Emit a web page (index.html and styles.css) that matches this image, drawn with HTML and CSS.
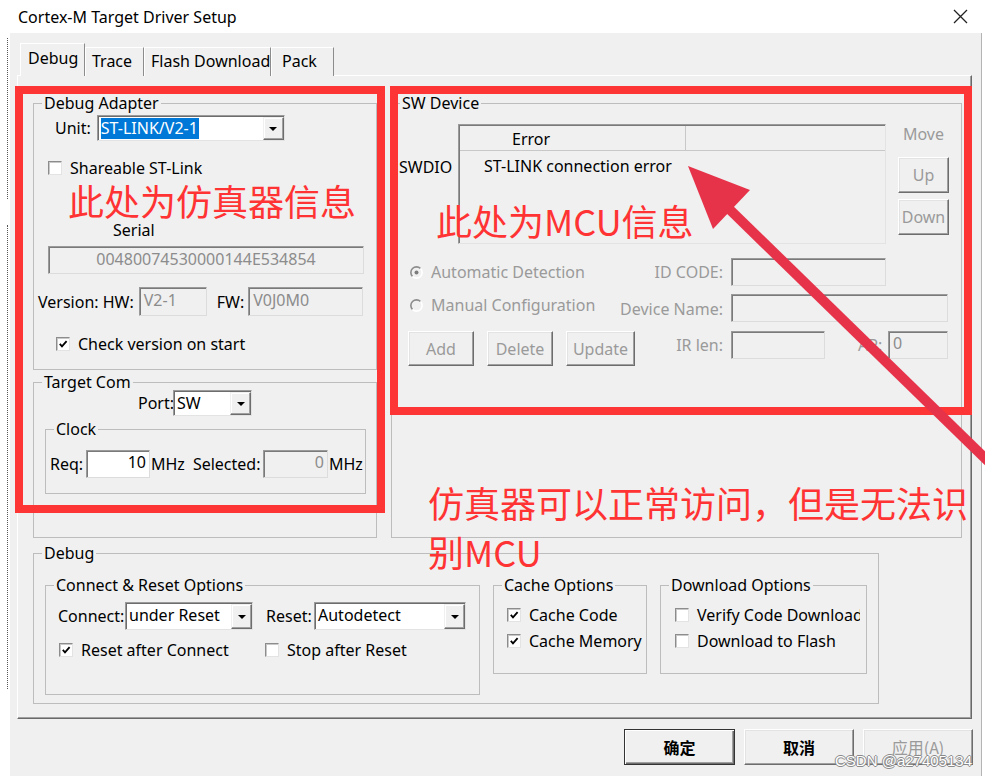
FILE: index.html
```html
<!DOCTYPE html>
<html lang="zh-CN">
<head>
    <meta charset="UTF-8">
    <meta name="viewport" content="width=device-width, initial-scale=1.0">
    <title>Cortex-M Target Driver Setup</title>
    <link rel="stylesheet" href="styles.css">
</head>
<body>
    <header class="titlebar">
        <span class="title">Cortex-M Target Driver Setup</span>
        <svg class="close" width="15" height="15" viewBox="0 0 15 15"><path d="M1 1L14 14M14 1L1 14" stroke="#222" stroke-width="1.3" fill="none"/></svg>
    </header>

    <div class="window">
        <div class="tabs">
            <div class="tab active w-debug">Debug</div>
            <div class="tab w-trace">Trace</div>
            <div class="tab w-flash">Flash Download</div>
            <div class="tab w-pack">Pack</div>
        </div>

        <div class="panel">
            <div class="top">
                <div class="col-left">
                    <!-- Debug Adapter -->
                    <fieldset class="grp adapter">
                        <legend>Debug Adapter</legend>
                        <div class="row unit-row">
                            <span class="lbl">Unit:</span>
                            <div class="combo c-unit"><span class="val"><span class="sel">ST-LINK/V2-1</span></span><span class="drop"><i></i></span></div>
                        </div>
                        <div class="row share-row">
                            <span class="chk"></span><span class="chk-lbl">Shareable ST-Link</span>
                        </div>
                        <div class="serial-lbl">Serial</div>
                        <div class="edit serial">00480074530000144E534854</div>
                        <div class="row ver-row">
                            <span class="lbl">Version: HW:</span>
                            <div class="edit e-hw">V2-1</div>
                            <span class="lbl fw">FW:</span>
                            <div class="edit e-fw">V0J0M0</div>
                        </div>
                        <div class="row chkver-row">
                            <span class="chk"><svg width="10" height="10" viewBox="0 0 10 10"><path d="M1.8 4.8L4 7.3L8.6 2.2" stroke="#000" stroke-width="1.8" fill="none"/></svg></span><span class="chk-lbl">Check version on start</span>
                        </div>
                    </fieldset>

                    <!-- Target Com -->
                    <fieldset class="grp target">
                        <legend>Target Com</legend>
                        <div class="row port-row">
                            <span class="lbl">Port:</span>
                            <div class="combo c-port"><span class="val">SW</span><span class="drop"><i></i></span></div>
                        </div>
                        <fieldset class="grp clock">
                            <legend>Clock</legend>
                            <div class="row clock-row">
                                <span class="lbl">Req:</span>
                                <div class="edit on num e-req">10</div>
                                <span class="lbl mhz">MHz</span>
                                <span class="lbl sel-lbl">Selected:</span>
                                <div class="edit num e-selected">0</div>
                                <span class="lbl mhz">MHz</span>
                            </div>
                        </fieldset>
                    </fieldset>
                </div>

                <!-- SW Device -->
                <fieldset class="grp swdev">
                    <legend>SW Device</legend>
                    <div class="sw-top">
                        <span class="swdio">SWDIO</span>
                        <div class="list">
                            <div class="list-head"><span class="hc1">Error</span><span class="hc2"></span></div>
                            <div class="list-row">ST-LINK connection error</div>
                        </div>
                        <div class="move-col">
                            <span class="off">Move</span>
                            <div class="btn off b-up">Up</div>
                            <div class="btn off b-down">Down</div>
                        </div>
                    </div>
                    <div class="row sw-row r-id">
                        <span class="radio"><svg width="13" height="13" viewBox="0 0 13 13"><circle cx="6.5" cy="6.5" r="5.6" fill="#f0f0f0"/><path d="M10.5 2.5A5.6 5.6 0 0 0 2.5 10.5" stroke="#8c8c8c" stroke-width="1.6" fill="none"/><path d="M10.5 2.5A5.6 5.6 0 0 1 2.5 10.5" stroke="#fff" stroke-width="1.6" fill="none"/><circle cx="6.5" cy="6.5" r="2" fill="#7c7c7c"/></svg></span>
                        <span class="off radio-lbl">Automatic Detection</span>
                        <span class="off flbl">ID CODE:</span>
                        <div class="edit e-id"></div>
                    </div>
                    <div class="row sw-row r-name">
                        <span class="radio"><svg width="13" height="13" viewBox="0 0 13 13"><circle cx="6.5" cy="6.5" r="5.6" fill="#f0f0f0"/><path d="M10.5 2.5A5.6 5.6 0 0 0 2.5 10.5" stroke="#8c8c8c" stroke-width="1.6" fill="none"/><path d="M10.5 2.5A5.6 5.6 0 0 1 2.5 10.5" stroke="#fff" stroke-width="1.6" fill="none"/></svg></span>
                        <span class="off radio-lbl">Manual Configuration</span>
                        <span class="off flbl">Device Name:</span>
                        <div class="edit e-name"></div>
                    </div>
                    <div class="row sw-row r-btns">
                        <div class="btn off b-add">Add</div>
                        <div class="btn off b-del">Delete</div>
                        <div class="btn off b-upd">Update</div>
                        <span class="off flbl">IR len:</span>
                        <div class="edit e-ir"></div>
                        <span class="off ap-lbl">AP:</span>
                        <div class="edit e-ap">0</div>
                    </div>
                </fieldset>
            </div>

            <!-- Debug -->
            <fieldset class="grp debug">
                <legend>Debug</legend>
                <div class="dbg-inner">
                    <fieldset class="grp conn">
                        <legend>Connect &amp; Reset Options</legend>
                        <div class="row conn-row">
                            <span class="lbl l-connect">Connect:</span>
                            <div class="combo c-connect"><span class="val">under Reset</span><span class="drop"><i></i></span></div>
                            <span class="lbl l-reset">Reset:</span>
                            <div class="combo c-reset"><span class="val">Autodetect</span><span class="drop"><i></i></span></div>
                        </div>
                        <div class="row conn-chk">
                            <div class="opt o-rac"><span class="chk"><svg width="10" height="10" viewBox="0 0 10 10"><path d="M1.8 4.8L4 7.3L8.6 2.2" stroke="#000" stroke-width="1.8" fill="none"/></svg></span><span class="chk-lbl">Reset after Connect</span></div>
                            <div class="opt"><span class="chk"></span><span class="chk-lbl">Stop after Reset</span></div>
                        </div>
                    </fieldset>
                    <fieldset class="grp cache">
                        <legend>Cache Options</legend>
                        <div class="row opt-row first"><span class="chk"><svg width="10" height="10" viewBox="0 0 10 10"><path d="M1.8 4.8L4 7.3L8.6 2.2" stroke="#000" stroke-width="1.8" fill="none"/></svg></span><span class="chk-lbl">Cache Code</span></div>
                        <div class="row opt-row"><span class="chk"><svg width="10" height="10" viewBox="0 0 10 10"><path d="M1.8 4.8L4 7.3L8.6 2.2" stroke="#000" stroke-width="1.8" fill="none"/></svg></span><span class="chk-lbl">Cache Memory</span></div>
                    </fieldset>
                    <fieldset class="grp dl">
                        <legend>Download Options</legend>
                        <div class="row opt-row first"><span class="chk"></span><span class="chk-lbl">Verify Code Download</span></div>
                        <div class="row opt-row"><span class="chk"></span><span class="chk-lbl">Download to Flash</span></div>
                    </fieldset>
                </div>
            </fieldset>
        </div>

        <div class="footer">
            <div class="btn default b-ok">确定</div>
            <div class="btn b-cancel">取消</div>
            <div class="btn off b-apply">应用(A)</div>
        </div>
    </div>

    <!-- 标注 -->
    <div class="dots d1"></div>
    <div class="dots d2"></div>
    <div class="mark mark-a"></div>
    <div class="mark mark-b"></div>
    <div class="note note-a">此处为仿真器信息</div>
    <div class="note note-b">此处为MCU信息</div>
    <div class="note note-c">仿真器可以正常访问，但是无法识别MCU</div>
    <svg class="arrow" width="985" height="776" viewBox="0 0 985 776">
        <line x1="995" y1="468" x2="722" y2="202" stroke="#e6334a" stroke-width="10"/>
        <polygon points="688,166 750,190 713,229" fill="#e6334a"/>
    </svg>
    <div class="watermark">CSDN @a27405134</div>
</body>
</html>
```

FILE: styles.css
```css
* {
    box-sizing: border-box;
}
html, body {
    margin: 0;
    padding: 0;
}
body {
    width: 985px;
    height: 776px;
    overflow: hidden;
    position: relative;
    background: #fff;
    font-family: "Noto Sans", "Noto Sans CJK SC", sans-serif;
    font-size: 16px;
    line-height: 20px;
    color: #000;
}

/* 标题栏 */
.titlebar {
    height: 33px;
    display: flex;
    align-items: center;
    padding-left: 18px;
}
.close {
    margin-left: auto;
    margin-right: 17px;
}

.window {
    margin-left: 10px;
    width: 972px;
    height: 743px;
    background: #f0f0f0;
    border-right: 1px solid #b4b4b4;
    padding-top: 10px;
}

/* 选项卡 */
.tabs {
    display: flex;
    align-items: flex-end;
    height: 33px;
    padding-left: 10px;
    margin-bottom: -1px;
    position: relative;
    z-index: 1;
}
.tab {
    height: 29px;
    line-height: 27px;
    padding-left: 6px;
    border-top: 1px solid #fff;
    border-left: 1px solid #fff;
    border-right: 1px solid #8c8c8c;
    background: #f0f0f0;
    white-space: nowrap;
    overflow: hidden;
}
.tab.active {
    height: 33px;
    line-height: 29px;
    padding-left: 7px;
}
.w-debug { width: 65px; }
.w-trace { width: 59px; }
.w-flash { width: 127px; padding-left: 6px; }
.w-pack { width: 63px; padding-left: 10px; }

.panel {
    margin-left: 7px;
    width: 955px;
    height: 644px;
    border-top: 1px solid #fff;
    border-left: 1px solid #fff;
    border-right: 1px solid #696969;
    border-bottom: 1px solid #696969;
    box-shadow: inset -1px -1px 0 #a0a0a0;
    padding: 17px 0 0 15px;
}
.top {
    display: flex;
    align-items: flex-start;
}
.col-left {
    width: 344px;
}

/* 分组框 */
.grp {
    margin: 0;
    padding: 0;
    min-width: 0;
    border: 1px solid #bdbdbd;
}
legend {
    padding: 0 2px;
    margin-left: 8px;
    height: 20px;
    line-height: 20px;
}
.row {
    display: flex;
    align-items: center;
}
.lbl {
    white-space: nowrap;
}
.off {
    color: #9a9a9a;
}

/* 控件 */
.combo {
    display: flex;
    height: 26px;
    background: #fff;
    border: 1px solid;
    border-color: #9a9a9a #e3e3e3 #e3e3e3 #9a9a9a;
    box-shadow: inset 1px 1px 0 #6d6d6d;
    padding: 1px 0 0 1px;
}
.combo .val {
    flex: 1;
    padding-left: 2px;
    line-height: 22px;
    white-space: nowrap;
    overflow: hidden;
}
.combo .sel {
    display: inline-block;
    background: #0078d7;
    color: #fff;
    line-height: 21px;
    padding-right: 1px;
}
.drop {
    width: 21px;
    background: #f0f0f0;
    border: 1px solid;
    border-color: #f0f0f0 #6d6d6d #6d6d6d #f0f0f0;
    box-shadow: inset -1px -1px 0 #a0a0a0, inset 1px 1px 0 #fff;
    display: flex;
    align-items: center;
    justify-content: center;
}
.drop i {
    width: 0;
    height: 0;
    border-top: 4px solid #000;
    border-left: 4px solid transparent;
    border-right: 4px solid transparent;
}
.edit {
    height: 28px;
    line-height: 25px;
    padding: 0 4px;
    background: #f0f0f0;
    color: #8c8c8c;
    border: 1px solid;
    border-color: #9a9a9a #dcdcdc #dcdcdc #9a9a9a;
    box-shadow: inset 1px 1px 0 #7a7a7a;
    white-space: nowrap;
    overflow: hidden;
}
.edit.on {
    background: #fff;
    color: #000;
}
.edit.num {
    text-align: right;
    padding-right: 3px;
    line-height: 23px;
}
.chk {
    width: 14px;
    height: 14px;
    flex: none;
    background: #fff;
    border: 1px solid;
    border-color: #8c8c8c #e3e3e3 #e3e3e3 #8c8c8c;
    box-shadow: inset 1px 1px 0 #c8c8c8;
    display: flex;
    align-items: center;
    justify-content: center;
}
.chk-lbl {
    margin-left: 8px;
    white-space: nowrap;
}
.btn {
    display: flex;
    align-items: center;
    justify-content: center;
    background: #f0f0f0;
    border: 1px solid;
    border-color: #fff #6d6d6d #6d6d6d #fff;
    box-shadow: inset -1px -1px 0 #a0a0a0, inset 1px 1px 0 #e3e3e3;
}
.radio {
    display: flex;
    width: 13px;
    height: 13px;
}

/* Debug Adapter */
.adapter {
    height: 277px;
}
.unit-row {
    margin-top: 2px;
    height: 26px;
}
.unit-row .lbl {
    margin-left: 21px;
}
.c-unit {
    margin-left: 6px;
    width: 188px;
}
.share-row {
    margin-top: 17px;
    height: 20px;
}
.share-row .chk {
    margin-left: 14px;
}
.serial-lbl {
    margin-top: 42px;
    margin-left: 79px;
}
.edit.serial {
    margin-top: 6px;
    margin-left: 14px;
    width: 316px;
    text-align: center;
}
.ver-row {
    margin-top: 13px;
    height: 29px;
}
.ver-row .lbl {
    margin-left: 4px;
}
.ver-row .edit {
    height: 29px;
}
.e-hw {
    margin-left: 5px;
    width: 68px;
}
.ver-row .fw {
    margin-left: 10px;
}
.e-fw {
    margin-left: 4px;
    width: 115px;
}
.chkver-row {
    margin-top: 18px;
    height: 20px;
}
.chkver-row .chk {
    margin-left: 22px;
}

/* Target Com */
.target {
    margin-top: 2px;
    height: 166px;
}
.port-row {
    margin-top: -2px;
    height: 26px;
}
.port-row .lbl {
    margin-left: 104px;
    width: 35px;
}
.c-port {
    width: 79px;
}
.clock {
    margin: 3px 0 0 11px;
    width: 321px;
    height: 75px;
}
.clock-row {
    margin-top: 11px;
    height: 28px;
}
.clock-row .lbl:first-child {
    margin-left: 4px;
    width: 36px;
}
.e-req {
    width: 64px;
}
.clock-row .mhz {
    margin-left: 1px;
}
.clock-row .sel-lbl {
    margin-left: 8px;
    width: 70px;
}
.e-selected {
    width: 65px;
}

/* SW Device */
.swdev {
    margin-left: 14px;
    width: 571px;
    height: 445px;
}
.sw-top {
    display: flex;
    align-items: flex-start;
    margin-top: 11px;
    height: 120px;
}
.swdio {
    margin: 33px 0 0 7px;
    width: 59px;
}
.list {
    width: 428px;
    height: 120px;
    background: #f0f0f0;
    border: 1px solid;
    border-color: #9a9a9a #e3e3e3 #e3e3e3 #9a9a9a;
    box-shadow: inset 1px 1px 0 #7a7a7a;
    padding: 1px 0 0 1px;
}
.list-head {
    display: flex;
    height: 25px;
}
.hc1, .hc2 {
    border-bottom: 1px solid #c8c8c8;
    line-height: 26px;
}
.hc1 {
    width: 226px;
    padding-left: 52px;
    border-right: 1px solid #c8c8c8;
}
.hc2 {
    flex: 1;
}
.list-row {
    margin-top: 5px;
    padding-left: 24px;
}
.move-col {
    margin-left: 12px;
    width: 51px;
    display: flex;
    flex-direction: column;
    align-items: center;
}
.move-col .btn {
    width: 51px;
    height: 36px;
}
.b-up {
    margin-top: 13px;
}
.b-down {
    margin-top: 6px;
}
.sw-row {
    width: 556px;
}
.r-id {
    margin-top: 14px;
    height: 28px;
}
.r-name {
    margin-top: 8px;
    height: 28px;
}
.sw-row .radio {
    margin-left: 18px;
}
.r-name .radio, .r-name .radio-lbl {
    margin-top: -6px;
}
.radio-lbl {
    margin-left: 8px;
    white-space: nowrap;
}
.flbl {
    margin-left: auto;
    margin-right: 8px;
    white-space: nowrap;
}
.r-name .flbl {
    margin-top: 2px;
}
.e-id {
    width: 155px;
    margin-right: 62px;
}
.e-name {
    width: 217px;
}
.r-btns {
    margin-top: 9px;
    align-items: flex-start;
}
.r-btns .btn {
    height: 35px;
    width: 66px;
    margin-left: 13px;
}
.r-btns .b-add {
    margin-left: 16px;
}
.r-btns .b-upd {
    width: 69px;
}
.r-btns .flbl, .ap-lbl {
    line-height: 28px;
}
.e-ir {
    width: 94px;
}
.ap-lbl {
    margin-left: 33px;
    width: 24px;
    margin-right: 6px;
}
.e-ap {
    width: 60px;
    line-height: 23px;
}

/* Debug */
.debug {
    margin-top: 5px;
    width: 846px;
    height: 161px;
}
.dbg-inner {
    display: flex;
    align-items: flex-start;
    margin-top: 12px;
}
.conn {
    margin-left: 11px;
    width: 435px;
    height: 120px;
}
.cache {
    margin-left: 13px;
    width: 154px;
    height: 99px;
}
.dl {
    margin-left: 13px;
    width: 207px;
    height: 99px;
}
.conn-row {
    margin-top: 7px;
    height: 28px;
}
.conn-row .combo {
    height: 28px;
}
.l-connect {
    margin-left: 12px;
    width: 67px;
}
.c-connect {
    width: 128px;
}
.l-reset {
    margin-left: 13px;
    width: 48px;
}
.c-reset {
    width: 152px;
}
.conn-chk {
    margin-top: 10px;
    height: 20px;
}
.opt {
    display: flex;
    align-items: center;
}
.o-rac {
    margin-left: 13px;
    width: 206px;
}
.opt-row {
    margin-top: 6px;
    height: 20px;
}
.opt-row.first {
    margin-top: 10px;
}
.opt-row .chk {
    margin-left: 13px;
}
.dl .opt-row {
    width: 199px;
    overflow: hidden;
}
.dl .opt-row .chk {
    margin-left: 14px;
}

/* 底部按钮 */
.footer {
    display: flex;
    justify-content: flex-end;
    gap: 9px;
    margin-top: 10px;
    padding-right: 8px;
}
.footer .btn {
    height: 36px;
    width: 110px;
    font-family: "Noto Sans CJK SC", sans-serif;
    font-weight: bold;
}
.footer .b-ok {
    width: 111px;
}
.btn.default {
    border-color: #333;
    box-shadow: inset 1px 1px 0 #fff, inset -1px -1px 0 #6d6d6d, inset -2px -2px 0 #a0a0a0;
}
.footer .b-apply {
    font-weight: normal;
}

/* 标注层 */
.dots {
    position: absolute;
    left: 7px;
    border-left: 1px dotted #555;
}
.d1 { top: 38px; height: 161px; }
.d2 { top: 225px; height: 464px; }
.mark {
    position: absolute;
    border: 8px solid #fe3535;
}
.mark-a {
    left: 15px;
    top: 86px;
    width: 370px;
    height: 427px;
}
.mark-b {
    left: 390px;
    top: 86px;
    width: 582px;
    height: 329px;
}
.note {
    position: absolute;
    color: #ff3333;
    font-family: "Noto Sans CJK SC", sans-serif;
    font-size: 36px;
    line-height: 36px;
    white-space: nowrap;
}
.note-a { left: 68px; top: 182px; }
.note-b { left: 436px; top: 202px; }
.note-c {
    left: 428px;
    top: 478px;
    width: 548px;
    line-height: 49px;
    white-space: normal;
}
.arrow {
    position: absolute;
    left: 0;
    top: 0;
}
.watermark {
    position: absolute;
    left: 835px;
    top: 751px;
    font-family: "Liberation Sans", sans-serif;
    font-size: 15px;
    color: #fff;
    text-shadow: 1px 0 #8a8a8a, -1px 0 #8a8a8a, 0 1px #8a8a8a, 0 -1px #8a8a8a;
}
```
